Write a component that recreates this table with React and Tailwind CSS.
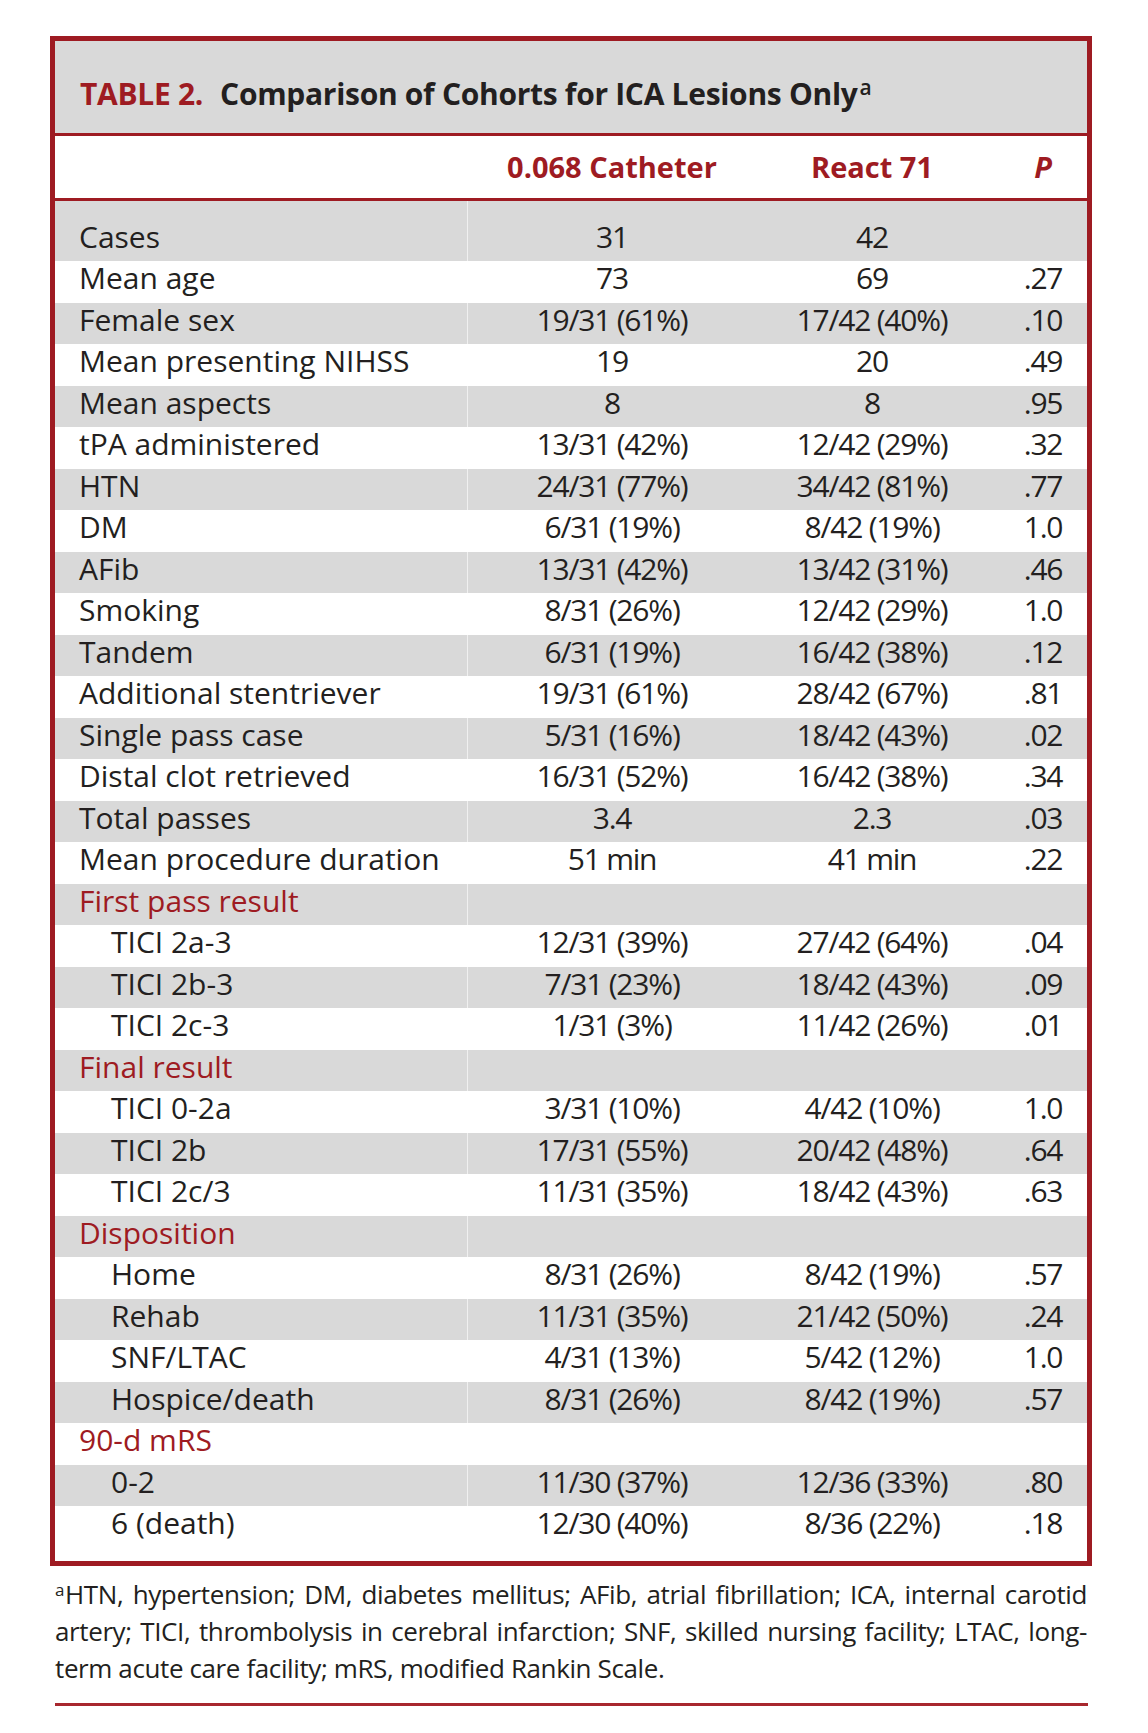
import React from "react";

const RED = "text-[#9e1b22]";

const rows = [
  { label: "Cases", a: "31", b: "42", p: "" },
  { label: "Mean age", a: "73", b: "69", p: ".27" },
  { label: "Female sex", a: "19/31 (61%)", b: "17/42 (40%)", p: ".10" },
  { label: "Mean presenting NIHSS", a: "19", b: "20", p: ".49" },
  { label: "Mean aspects", a: "8", b: "8", p: ".95" },
  { label: "tPA administered", a: "13/31 (42%)", b: "12/42 (29%)", p: ".32" },
  { label: "HTN", a: "24/31 (77%)", b: "34/42 (81%)", p: ".77" },
  { label: "DM", a: "6/31 (19%)", b: "8/42 (19%)", p: "1.0" },
  { label: "AFib", a: "13/31 (42%)", b: "13/42 (31%)", p: ".46" },
  { label: "Smoking", a: "8/31 (26%)", b: "12/42 (29%)", p: "1.0" },
  { label: "Tandem", a: "6/31 (19%)", b: "16/42 (38%)", p: ".12" },
  { label: "Additional stentriever", a: "19/31 (61%)", b: "28/42 (67%)", p: ".81" },
  { label: "Single pass case", a: "5/31 (16%)", b: "18/42 (43%)", p: ".02" },
  { label: "Distal clot retrieved", a: "16/31 (52%)", b: "16/42 (38%)", p: ".34" },
  { label: "Total passes", a: "3.4", b: "2.3", p: ".03" },
  { label: "Mean procedure duration", a: "51 min", b: "41 min", p: ".22" },
  { label: "First pass result", section: true },
  { label: "TICI 2a-3", a: "12/31 (39%)", b: "27/42 (64%)", p: ".04", sub: true },
  { label: "TICI 2b-3", a: "7/31 (23%)", b: "18/42 (43%)", p: ".09", sub: true },
  { label: "TICI 2c-3", a: "1/31 (3%)", b: "11/42 (26%)", p: ".01", sub: true },
  { label: "Final result", section: true },
  { label: "TICI 0-2a", a: "3/31 (10%)", b: "4/42 (10%)", p: "1.0", sub: true },
  { label: "TICI 2b", a: "17/31 (55%)", b: "20/42 (48%)", p: ".64", sub: true },
  { label: "TICI 2c/3", a: "11/31 (35%)", b: "18/42 (43%)", p: ".63", sub: true },
  { label: "Disposition", section: true },
  { label: "Home", a: "8/31 (26%)", b: "8/42 (19%)", p: ".57", sub: true },
  { label: "Rehab", a: "11/31 (35%)", b: "21/42 (50%)", p: ".24", sub: true },
  { label: "SNF/LTAC", a: "4/31 (13%)", b: "5/42 (12%)", p: "1.0", sub: true },
  { label: "Hospice/death", a: "8/31 (26%)", b: "8/42 (19%)", p: ".57", sub: true },
  { label: "90-d mRS", section: true },
  { label: "0-2", a: "11/30 (37%)", b: "12/36 (33%)", p: ".80", sub: true },
  { label: "6 (death)", a: "12/30 (40%)", b: "8/36 (22%)", p: ".18", sub: true },
];

function Row({ row, gray }) {
  return (
    <div className={`flex h-[41.5px] leading-[34px] ${gray ? "bg-[#d9d9d9]" : "bg-white"}`}>
      <div
        className={`w-[413px] shrink-0 border-r border-white/60 ${row.sub ? "pl-[56px]" : "pl-[24px]"} ${
          row.section ? RED : ""
        }`}
      >
        {row.label}
      </div>
      <div className="w-[288px] shrink-0 text-center tracking-[-0.04em]">{row.a}</div>
      <div className="w-[232px] shrink-0 text-center tracking-[-0.04em]">{row.b}</div>
      <div className="w-[99px] shrink-0 pl-[11px] text-center tracking-[-0.04em]">{row.p}</div>
    </div>
  );
}

export default function App() {
  return (
    <div className="min-h-screen bg-white pl-[50px] pt-[36px] font-['Open_Sans',sans-serif] text-[#231f20]">
      <div className="w-[1042px]">
        <div className="border-[5px] border-[#9e1b22]">
          {/* title */}
          <div className="h-[95px] border-b-[3px] border-[#9e1b22] bg-[#d9d9d9] pl-[25px] pt-[33px] text-[30px] font-bold leading-[40px] tracking-[-0.01em]">
            <span className={RED}>TABLE 2.</span>
            <span className="ml-[17px]">
              Comparison of Cohorts for ICA Lesions Only
              <sup className="ml-[2px] text-[21px] font-semibold">a</sup>
            </span>
          </div>

          {/* header */}
          <div className={`flex h-[65px] border-b-[3px] border-[#9e1b22] bg-white text-[29px] font-bold leading-[62px] ${RED}`}>
            <div className="w-[413px] shrink-0" />
            <div className="w-[288px] shrink-0 text-center">0.068 Catheter</div>
            <div className="w-[232px] shrink-0 text-center">React 71</div>
            <div className="w-[99px] shrink-0 pl-[11px] text-center italic">P</div>
          </div>

          {/* body */}
          <div className="text-[30px]">
            <div className="flex h-[18.5px] bg-[#d9d9d9]">
              <div className="w-[413px] shrink-0 border-r border-white/60" />
            </div>
            {rows.map((row, i) => (
              <Row key={row.label} row={row} gray={i % 2 === 0} />
            ))}
            <div className="h-[13.5px] bg-white" />
          </div>
        </div>

        {/* footnote, lines broken as in the print */}
        <div className="mt-[10px] px-[5px] text-[26px] leading-[37px] tracking-[-0.015em]">
          <p className="whitespace-nowrap text-justify [text-align-last:justify]">
            <sup className="mr-[1px] text-[17px]">a</sup>HTN, hypertension; DM, diabetes mellitus; AFib, atrial
            fibrillation; ICA, internal carotid
          </p>
          <p className="whitespace-nowrap text-justify [text-align-last:justify]">
            artery; TICI, thrombolysis in cerebral infarction; SNF, skilled nursing facility; LTAC, long-
          </p>
          <p className="whitespace-nowrap">term acute care facility; mRS, modified Rankin Scale.</p>
        </div>
        <div className="ml-[5px] mt-[16px] h-[3px] w-[1033px] bg-[#a8282e]" />
      </div>
    </div>
  );
}
